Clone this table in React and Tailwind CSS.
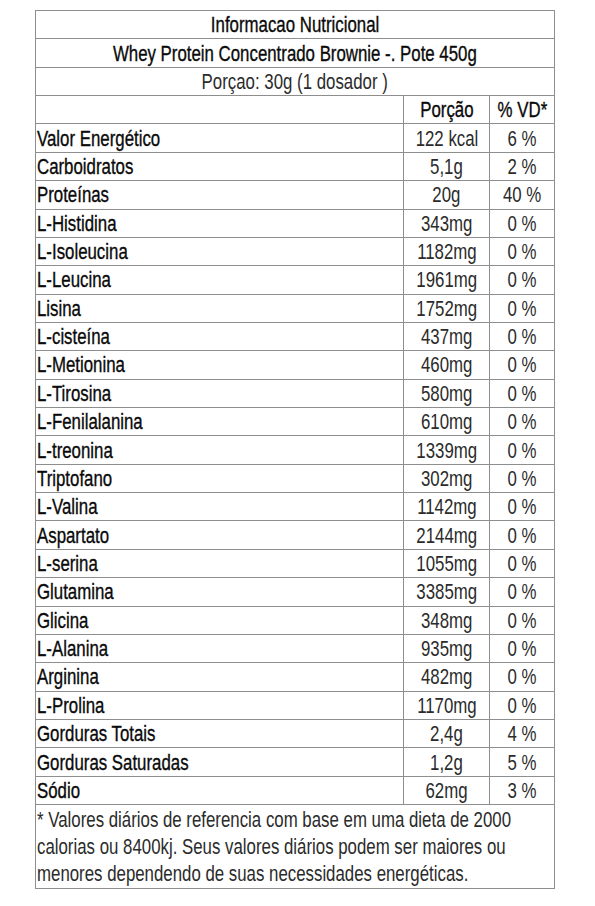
import React from "react";

const rows = [
  ["Valor Energético", "122 kcal", "6 %"],
  ["Carboidratos", "5,1g", "2 %"],
  ["Proteínas", "20g", "40 %"],
  ["L-Histidina", "343mg", "0 %"],
  ["L-Isoleucina", "1182mg", "0 %"],
  ["L-Leucina", "1961mg", "0 %"],
  ["Lisina", "1752mg", "0 %"],
  ["L-cisteína", "437mg", "0 %"],
  ["L-Metionina", "460mg", "0 %"],
  ["L-Tirosina", "580mg", "0 %"],
  ["L-Fenilalanina", "610mg", "0 %"],
  ["L-treonina", "1339mg", "0 %"],
  ["Triptofano", "302mg", "0 %"],
  ["L-Valina", "1142mg", "0 %"],
  ["Aspartato", "2144mg", "0 %"],
  ["L-serina", "1055mg", "0 %"],
  ["Glutamina", "3385mg", "0 %"],
  ["Glicina", "348mg", "0 %"],
  ["L-Alanina", "935mg", "0 %"],
  ["Arginina", "482mg", "0 %"],
  ["L-Prolina", "1170mg", "0 %"],
  ["Gorduras Totais", "2,4g", "4 %"],
  ["Gorduras Saturadas", "1,2g", "5 %"],
  ["Sódio", "62mg", "3 %"],
];

function L({ children, className = "" }) {
  return (
    <span className={"inline-block whitespace-nowrap origin-left scale-x-[0.765] " + className}>
      {children}
    </span>
  );
}

function C({ children, className = "" }) {
  return (
    <span className={"inline-block whitespace-nowrap origin-center scale-x-[0.765] " + className}>
      {children}
    </span>
  );
}

const strong = "text-[#0a0a0a] [-webkit-text-stroke:0.35px_#0a0a0a]";
const light = "text-[#2b2b2b]";

export default function App() {
  return (
    <div
      className="w-[595px] h-[906px] bg-white pt-[10px] pl-[35px]"
      style={{ fontFamily: '"Liberation Sans", Arial, sans-serif' }}
    >
      <div className="w-[520px] border-t border-l border-r border-[#8e8e8e] text-[22px] leading-[27px]">
        <div className="h-[28.36px] border-b border-[#8e8e8e] flex items-center justify-center">
          <C className={strong}>Informacao Nutricional</C>
        </div>
        <div className="h-[28.36px] border-b border-[#8e8e8e] flex items-center justify-center">
          <C className={strong}>Whey Protein Concentrado Brownie -. Pote 450g</C>
        </div>
        <div className="h-[28.36px] border-b border-[#8e8e8e] flex items-center justify-center">
          <C className={light}>Porçao: 30g (1 dosador )</C>
        </div>
        <div className="h-[28.36px] border-b border-[#8e8e8e] grid grid-cols-[368px_86px_64px]">
          <div className="border-r border-[#8e8e8e]"></div>
          <div className="border-r border-[#8e8e8e] flex items-center justify-center">
            <C className={strong}>Porção</C>
          </div>
          <div className="flex items-center justify-center">
            <C className={strong}>% VD*</C>
          </div>
        </div>
        {rows.map(([a, b, c]) => (
          <div key={a} className="h-[28.36px] border-b border-[#8e8e8e] grid grid-cols-[368px_86px_64px]">
            <div className="border-r border-[#8e8e8e] flex items-center pl-[1px]">
              <L className={strong}>{a}</L>
            </div>
            <div className="border-r border-[#8e8e8e] flex items-center justify-center">
              <C className={light}>{b}</C>
            </div>
            <div className="flex items-center justify-center">
              <C className={light}>{c}</C>
            </div>
          </div>
        ))}
        <div className="border-b border-[#8e8e8e] overflow-hidden pl-[1px] pt-[1px] leading-[27.2px] flex flex-col items-start">
          <L className={light}>* Valores diários de referencia com base em uma dieta de 2000</L>
          <L className={light}>calorias ou 8400kj. Seus valores diários podem ser maiores ou</L>
          <L className={light}>menores dependendo de suas necessidades energéticas.</L>
        </div>
      </div>
    </div>
  );
}
